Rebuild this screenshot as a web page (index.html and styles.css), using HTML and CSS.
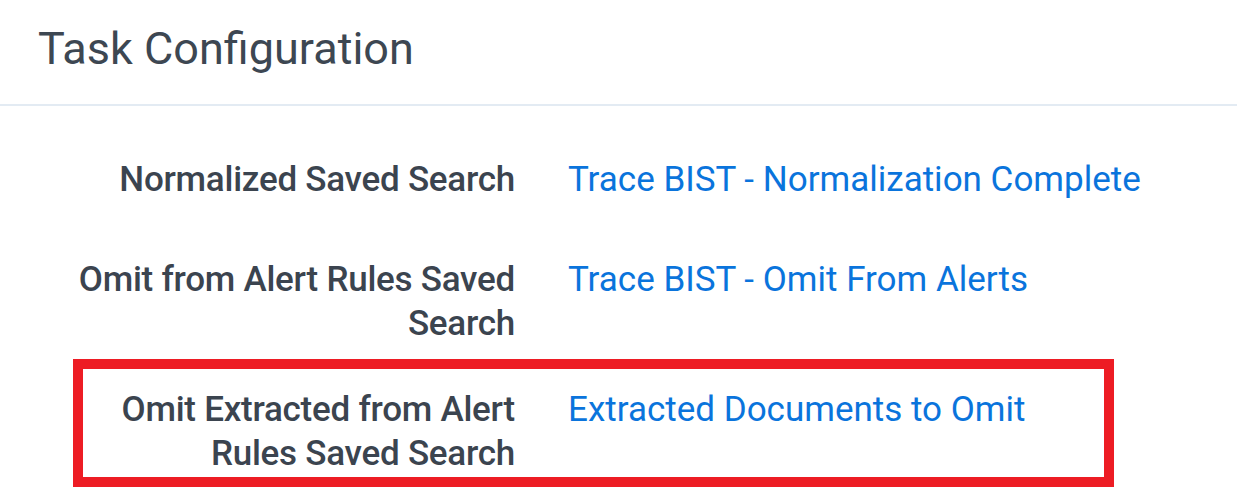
FILE: index.html
```html
<!DOCTYPE html>
<html lang="en">
<head>
    <meta charset="UTF-8">
    <meta name="viewport" content="width=device-width, initial-scale=1.0">
    <title>Task Configuration</title>
    <link rel="stylesheet" href="styles.css">
</head>
<body>
    <div class="panel-header">
        <h1>Task Configuration</h1>
    </div>
    <div class="config-list">
        <div class="config-row row-first">
            <div class="config-label">Normalized Saved Search</div>
            <div class="config-value"><a href="#">Trace BIST - Normalization Complete</a></div>
        </div>
        <div class="config-row row-second">
            <div class="config-label">Omit from Alert Rules Saved Search</div>
            <div class="config-value"><a href="#">Trace BIST - Omit From Alerts</a></div>
        </div>
        <div class="config-row highlight">
            <div class="config-label">Omit Extracted from Alert Rules Saved Search</div>
            <div class="config-value"><a href="#">Extracted Documents to Omit</a></div>
        </div>
    </div>
</body>
</html>
```

FILE: styles.css
```css
body {
    margin: 0;
    font-family: Roboto, "Liberation Sans", sans-serif;
    background-color: #fff;
    color: #3b444f;
    overflow: hidden;
}
.panel-header {
    padding: 21px 38px 27px;
    border-bottom: 2px solid #e3ebf3;
}
.panel-header h1 {
    margin: 0;
    font-size: 45px;
    line-height: 56px;
    font-weight: 400;
    color: #3d4752;
}
.config-list {
    padding-top: 52px;
}
.config-row {
    display: grid;
    grid-template-columns: 445px 1fr;
    column-gap: 53px;
    margin-left: 70px;
    width: 1047px;
    font-size: 35px;
    line-height: 44px;
}
.row-first {
    margin-bottom: 56px;
}
.row-second {
    margin-bottom: 10px;
}
.config-label {
    text-align: right;
    font-weight: 500;
    letter-spacing: -0.25px;
    color: #3b444f;
}
.config-value {
    white-space: nowrap;
}
.config-value a {
    color: #0a74dc;
    text-decoration: none;
}
.highlight {
    padding: 32px 0 14px;
    outline: 10px solid #ed1c24;
    outline-offset: -13px;
}
```
